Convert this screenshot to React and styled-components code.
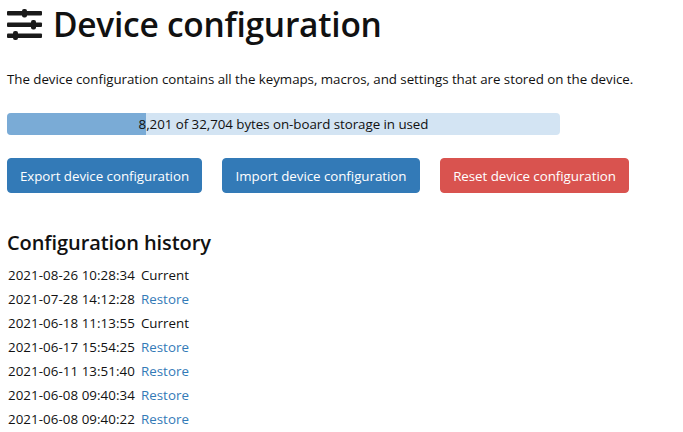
import { Fragment } from "react";
import styled, { createGlobalStyle } from "styled-components";

const GlobalStyle = createGlobalStyle`
  body {
    margin: 0;
    background: #fff;
    color: #111;
    font-family: "Open Sans", "Noto Sans", sans-serif;
    font-size: 13.33px;
    letter-spacing: -0.04px;
  }
`;

const Page = styled.main`
  display: flex;
  flex-direction: column;
  align-items: flex-start;
  height: 432px;
  padding: 0 7px;
  box-sizing: border-box;
  overflow: hidden;
`;

const Title = styled.h1`
  display: flex;
  align-items: center;
  gap: 10px;
  height: 48px;
  margin: 0;
  font-size: 33.5px;
  font-weight: 600;
  letter-spacing: -0.25px;
`;

const Intro = styled.p`
  margin: 22px 0 0;
  line-height: 18px;
`;

const Progress = styled.div`
  position: relative;
  width: 553px;
  height: 22px;
  margin-top: 25px;
  border-radius: 4px;
  overflow: hidden;
  background: #d3e4f3;
`;

const ProgressFill = styled.div`
  height: 100%;
  background: #7aabd6;
`;

const ProgressLabel = styled.span`
  position: absolute;
  inset: 0;
  text-align: center;
  line-height: 22px;
`;

const Actions = styled.div`
  display: flex;
  gap: 20px;
  margin-top: 23px;
`;

const Button = styled.button`
  width: ${(p) => p.$width}px;
  height: 35px;
  padding: 0;
  border: 1px solid ${(p) => (p.$danger ? "#d9534f" : "#337ab7")};
  border-radius: 4px;
  background: ${(p) => (p.$danger ? "#d9534f" : "#337ab7")};
  color: #fff;
  font: inherit;
  letter-spacing: inherit;
`;

const Heading = styled.h2`
  margin: 36px 0 0;
  font-size: 20px;
  line-height: 28px;
  font-weight: 600;
  letter-spacing: -0.08px;
`;

const History = styled.div`
  display: grid;
  grid-template-columns: auto auto;
  column-gap: 6px;
  margin-top: 6px;
  padding-left: 1px;
  line-height: 24px;
  letter-spacing: 0.06px;
`;

const Restore = styled.a`
  color: #337ab7;
  text-decoration: none;
`;

const history = [
  ["2021-08-26 10:28:34", true],
  ["2021-07-28 14:12:28", false],
  ["2021-06-18 11:13:55", true],
  ["2021-06-17 15:54:25", false],
  ["2021-06-11 13:51:40", false],
  ["2021-06-08 09:40:34", false],
  ["2021-06-08 09:40:22", false],
];

function SlidersIcon() {
  return (
    <svg width="36" height="31" viewBox="0 0 36 31" fill="#1a1a1a">
      <rect x="0" y="2" width="35" height="4.5" rx="1" />
      <rect x="0" y="13.5" width="35" height="4.5" rx="1" />
      <rect x="0" y="24.5" width="35" height="4.5" rx="1" />
      <rect x="15" y="0" width="5" height="8.5" rx="2" />
      <rect x="24" y="11" width="5" height="9.5" rx="2" />
      <rect x="6" y="22" width="5" height="9" rx="2" />
    </svg>
  );
}

export default function App() {
  return (
    <Page>
      <GlobalStyle />
      <Title>
        <SlidersIcon />
        Device configuration
      </Title>
      <Intro>
        The device configuration contains all the keymaps, macros, and settings that are stored on the device.
      </Intro>
      <Progress>
        <ProgressFill style={{ width: `${(8201 / 32704) * 100}%` }} />
        <ProgressLabel>8,201 of 32,704 bytes on-board storage in used</ProgressLabel>
      </Progress>
      <Actions>
        <Button $width={195}>Export device configuration</Button>
        <Button $width={198}>Import device configuration</Button>
        <Button $width={189} $danger>Reset device configuration</Button>
      </Actions>
      <Heading>Configuration history</Heading>
      <History>
        {history.map(([date, current]) => (
          <Fragment key={date}>
            <span>{date}</span>
            {current ? <span>Current</span> : <Restore href="#">Restore</Restore>}
          </Fragment>
        ))}
      </History>
    </Page>
  );
}
